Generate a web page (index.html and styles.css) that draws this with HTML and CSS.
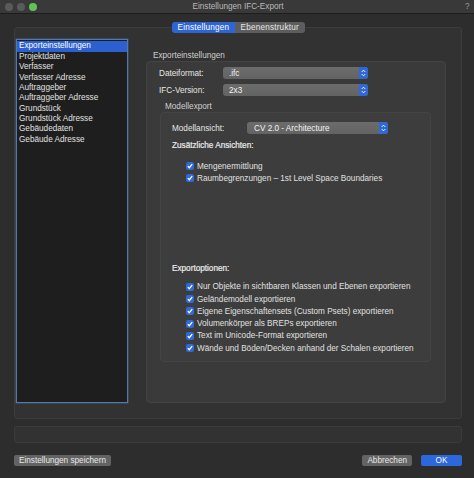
FILE: index.html
```html
<!DOCTYPE html>
<html lang="de">
<head>
    <meta charset="UTF-8">
    <title>Einstellungen IFC-Export</title>
    <link rel="stylesheet" href="styles.css">
</head>
<body>

<div class="window">
    <div class="titlebar">
        <div class="lights">
            <span class="light"></span>
            <span class="light"></span>
            <span class="light green"></span>
        </div>
        <div class="title">Einstellungen IFC-Export</div>
        <div class="help">?</div>
    </div>

    <div class="content">
        <div class="tabs">
            <span class="tab active">Einstellungen</span>
            <span class="tab">Ebenenstruktur</span>
        </div>

        <div class="tabbox">
            <ul class="list">
                <li class="selected">Exporteinstellungen</li>
                <li>Projektdaten</li>
                <li>Verfasser</li>
                <li>Verfasser Adresse</li>
                <li>Auftraggeber</li>
                <li>Auftraggeber Adresse</li>
                <li>Grundstück</li>
                <li>Grundstück Adresse</li>
                <li>Gebäudedaten</li>
                <li>Gebäude Adresse</li>
            </ul>

            <div class="pane">
                <div class="group-title">Exporteinstellungen</div>
                <div class="group">
                    <div class="row">
                        <span class="label">Dateiformat:</span>
                        <div class="select wide">
                            <span>.ifc</span>
                            <span class="arrows"><svg width="9" height="12" viewBox="0 0 9 12"><path d="M2.8 4.9 L4.5 3.2 L6.2 4.9 M2.8 7.1 L4.5 8.8 L6.2 7.1" fill="none" stroke="#fff" stroke-width="1"/></svg></span>
                        </div>
                    </div>
                    <div class="row">
                        <span class="label">IFC-Version:</span>
                        <div class="select wide">
                            <span>2x3</span>
                            <span class="arrows"><svg width="9" height="12" viewBox="0 0 9 12"><path d="M2.8 4.9 L4.5 3.2 L6.2 4.9 M2.8 7.1 L4.5 8.8 L6.2 7.1" fill="none" stroke="#fff" stroke-width="1"/></svg></span>
                        </div>
                    </div>

                    <div class="group-title sub">Modellexport</div>
                    <div class="group inner">
                        <div class="row">
                            <span class="label long">Modellansicht:</span>
                            <div class="select">
                                <span>CV 2.0 - Architecture</span>
                                <span class="arrows"><svg width="9" height="12" viewBox="0 0 9 12"><path d="M2.8 4.9 L4.5 3.2 L6.2 4.9 M2.8 7.1 L4.5 8.8 L6.2 7.1" fill="none" stroke="#fff" stroke-width="1"/></svg></span>
                            </div>
                        </div>

                        <div class="heading">Zusätzliche Ansichten:</div>
                        <div class="checks">
                            <label class="check"><span class="box"><svg width="8" height="8" viewBox="0 0 8 8"><path d="M1.8 4.1 L3.3 5.7 L6.2 2.2" fill="none" stroke="#fff" stroke-width="1.3"/></svg></span>Mengenermittlung</label>
                            <label class="check"><span class="box"><svg width="8" height="8" viewBox="0 0 8 8"><path d="M1.8 4.1 L3.3 5.7 L6.2 2.2" fill="none" stroke="#fff" stroke-width="1.3"/></svg></span>Raumbegrenzungen – 1st Level Space Boundaries</label>
                        </div>

                        <div class="heading options">Exportoptionen:</div>
                        <div class="checks">
                            <label class="check"><span class="box"><svg width="8" height="8" viewBox="0 0 8 8"><path d="M1.8 4.1 L3.3 5.7 L6.2 2.2" fill="none" stroke="#fff" stroke-width="1.3"/></svg></span>Nur Objekte in sichtbaren Klassen und Ebenen exportieren</label>
                            <label class="check"><span class="box"><svg width="8" height="8" viewBox="0 0 8 8"><path d="M1.8 4.1 L3.3 5.7 L6.2 2.2" fill="none" stroke="#fff" stroke-width="1.3"/></svg></span>Geländemodell exportieren</label>
                            <label class="check"><span class="box"><svg width="8" height="8" viewBox="0 0 8 8"><path d="M1.8 4.1 L3.3 5.7 L6.2 2.2" fill="none" stroke="#fff" stroke-width="1.3"/></svg></span>Eigene Eigenschaftensets (Custom Psets) exportieren</label>
                            <label class="check"><span class="box"><svg width="8" height="8" viewBox="0 0 8 8"><path d="M1.8 4.1 L3.3 5.7 L6.2 2.2" fill="none" stroke="#fff" stroke-width="1.3"/></svg></span>Volumenkörper als BREPs exportieren</label>
                            <label class="check"><span class="box"><svg width="8" height="8" viewBox="0 0 8 8"><path d="M1.8 4.1 L3.3 5.7 L6.2 2.2" fill="none" stroke="#fff" stroke-width="1.3"/></svg></span>Text im Unicode-Format exportieren</label>
                            <label class="check"><span class="box"><svg width="8" height="8" viewBox="0 0 8 8"><path d="M1.8 4.1 L3.3 5.7 L6.2 2.2" fill="none" stroke="#fff" stroke-width="1.3"/></svg></span>Wände und Böden/Decken anhand der Schalen exportieren</label>
                        </div>
                    </div>
                </div>
            </div>
        </div>

        <div class="statusbar"></div>

        <div class="buttons">
            <button class="btn">Einstellungen speichern</button>
            <span class="spacer"></span>
            <button class="btn">Abbrechen</button>
            <button class="btn ok">OK</button>
        </div>
    </div>
</div>

</body>
</html>
```

FILE: styles.css
```css
body {
    margin: 0;
    background-color: #2d2d2d;
    font-family: "Liberation Sans", Arial, sans-serif;
    font-size: 8.2px;
    color: #dcdcdc;
    overflow: hidden;
}

.window {
    width: 474px;
    height: 478px;
    display: flex;
    flex-direction: column;
}

/* Titelleiste */
.titlebar {
    height: 13px;
    display: flex;
    align-items: center;
    background-color: #393939;
    border-bottom: 1px solid #1d1d1d;
    padding: 0 3px 0 5px;
}

.lights {
    display: flex;
    gap: 4px;
    width: 60px;
}

.light {
    width: 8px;
    height: 8px;
    border-radius: 50%;
    background-color: #5a5a5a;
}

.light.green {
    background-color: #62c355;
}

.title {
    flex: 1;
    text-align: center;
    color: #b9b9b9;
    padding-right: 54px;
}

.help {
    color: #9a9a9a;
    width: 6px;
}

.content {
    flex: 1;
    display: flex;
    flex-direction: column;
    padding: 0 12px 0 14px;
}

/* Tabs */
.tabs {
    align-self: center;
    display: flex;
    margin-top: 8px;
    height: 11px;
    border-radius: 3px;
    overflow: hidden;
    position: relative;
    z-index: 2;
}

.tab {
    line-height: 11px;
    background-color: #5d5d5d;
    color: #e6e6e6;
    padding: 0 6px;
    width: 58px;
    text-align: center;
    letter-spacing: 0.2px;
}

.tab.active {
    background-color: #2e65d5;
    color: #fff;
    width: 51px;
}

.tabbox {
    height: 379px;
    margin-top: -6px;
    background-color: #323232;
    border: 1px solid #3c3c3c;
    border-radius: 3px;
    display: flex;
    align-items: flex-start;
    padding: 11px 15px 0 1px;
}

/* Linke Liste */
.list {
    list-style: none;
    margin: 0;
    padding: 0.5px 0 0 0;
    width: 111px;
    height: 361px;
    background-color: #1e1e1e;
    border: 1px solid #5579a8;
    box-shadow: 0 0 0 0.5px #3d5a80;
}

.list li {
    line-height: 10.35px;
    padding-left: 2px;
    color: #e2e2e2;
}

.list li.selected {
    background-color: #2c5fcf;
    color: #fff;
    padding-top: 0.6px;
    padding-bottom: 0.6px;
}

/* Rechte Seite */
.pane {
    margin-left: 18px;
    width: 300px;
    display: flex;
    flex-direction: column;
}

.group-title {
    line-height: 10px;
    margin-top: 12px;
    padding-left: 7px;
    color: #cfcfcf;
}

.group-title.sub {
    margin-top: 6px;
    padding-left: 6px;
}

.group {
    height: 335px;
    background-color: #3a3a3a;
    border: 1px solid #444;
    border-radius: 4px;
    padding: 5px 15px 0 12px;
}

.group.inner {
    height: 235px;
    margin-left: 1px;
    width: 243px;
    background-color: #3d3d3d;
    padding: 9px 15px 4px 11px;
}

.row {
    display: flex;
    align-items: center;
    height: 12px;
    margin-bottom: 5px;
}

.label {
    width: 64px;
    color: #e6e6e6;
}

.label.long {
    width: 75px;
}

.select {
    width: 141px;
    height: 12px;
    display: flex;
    align-items: center;
    justify-content: space-between;
    background: linear-gradient(#6c6c6c, #636363);
    border-radius: 3px;
    overflow: hidden;
    color: #f2f2f2;
    padding-left: 7px;
    box-sizing: border-box;
}

.select.wide {
    width: 145px;
    padding-left: 6px;
}

.arrows {
    width: 9px;
    height: 12px;
    background-color: #2f69d8;
    display: flex;
}

.heading {
    line-height: 10px;
    margin-top: 7px;
    color: #ececec;
    -webkit-text-stroke: 0.2px #ececec;
}

.heading.options {
    margin-top: 79px;
}

.checks {
    display: flex;
    flex-direction: column;
    margin-top: 9px;
    padding-left: 14px;
}

.heading.options + .checks {
    margin-top: 7px;
}

.check {
    display: flex;
    align-items: center;
    height: 12.3px;
    color: #e0e0e0;
}

.box {
    width: 8px;
    height: 8px;
    border-radius: 2px;
    background-color: #2f6ad9;
    margin-right: 3px;
    display: flex;
}

/* Unten */
.statusbar {
    height: 15px;
    margin-top: 7px;
    background-color: #323232;
    border: 1px solid #3b3b3b;
    border-radius: 3px;
}

.buttons {
    display: flex;
    margin-top: 12px;
}

.spacer {
    flex: 1;
}

.btn {
    height: 11px;
    padding: 0 5px;
    font-family: inherit;
    font-size: 8.2px;
    line-height: 11px;
    background-color: #636363;
    color: #e8e8e8;
    border: none;
    border-radius: 2px;
}

.btn.ok {
    width: 41px;
    margin-left: 9px;
    background-color: #2d67dc;
    color: #fff;
}
```
